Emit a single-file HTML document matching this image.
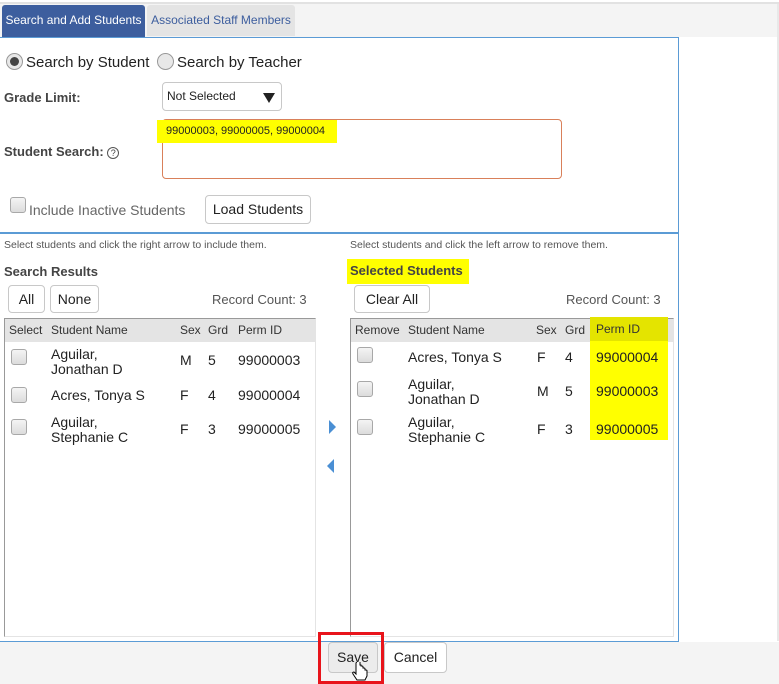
<!DOCTYPE html>
<html><head><meta charset="utf-8"><style>
*{box-sizing:border-box;margin:0;padding:0}
body{width:779px;height:684px;position:relative;background:#fff;font-family:"Liberation Sans",sans-serif;color:#222;overflow:hidden}
.a{position:absolute;white-space:nowrap}
.btn{position:absolute;border:1px solid #c8c8c8;border-radius:4px;background:#fff;font-size:14px;color:#222;text-align:center}
.cb{position:absolute;width:16px;height:16px;border:1px solid #a8a8a8;border-radius:3px;background:linear-gradient(#f4f4f4,#dcdcdc)}
.hdr{position:absolute;height:23px;background:#e4e4e4;font-size:12px;color:#333}
.t14{font-size:14px;color:#222;line-height:15px}
.s11{font-size:10.5px;color:#555}
</style></head><body>
<div class="a" style="left:0;top:2px;width:779px;height:2px;background:#e2e2e2"></div>
<div class="a" style="left:0;top:4px;width:779px;height:33px;background:#f4f4f4"></div>
<div class="a" style="left:777px;top:4px;width:2px;height:637px;background:#e8e8e8"></div>
<div class="a" style="left:2px;top:5px;width:143px;height:32px;background:#3d5e9e;border-radius:3px 3px 0 0;color:#fff;font-size:12px;line-height:31px;text-align:center">Search and Add Students</div>
<div class="a" style="left:147px;top:5px;width:148px;height:31px;background:#e4e4e4;border-radius:3px 3px 0 0;color:#3d5e9e;font-size:12px;line-height:31px;text-align:center">Associated Staff Members</div>
<div class="a" style="left:0;top:37px;width:679px;height:605px;border:1px solid #5b9bd5;border-left:none"></div>
<div class="a" style="left:0;top:232px;width:679px;height:2px;background:#5b9bd5"></div>
<div class="a" style="left:0;top:642px;width:779px;height:42px;background:#f4f4f4"></div>
<div class="a" style="left:6px;top:53px;width:17px;height:17px;border-radius:50%;border:1px solid #999;background:#e8e8e8"><div style="margin:3px;width:9px;height:9px;border-radius:50%;background:#444"></div></div>
<div class="a t14" style="left:26px;top:55px;font-size:15px">Search by Student</div>
<div class="a" style="left:157px;top:53px;width:17px;height:17px;border-radius:50%;border:1px solid #999;background:#e8e8e8"></div>
<div class="a t14" style="left:177px;top:55px;font-size:15px">Search by Teacher</div>
<div class="a" style="left:4px;top:90px;font-size:13px;font-weight:bold;color:#444">Grade Limit:</div>
<div class="a" style="left:162px;top:82px;width:120px;height:29px;border:1px solid #c8c8c8;border-radius:4px;font-size:12px;line-height:27px;padding-left:4px">Not Selected<span style="position:absolute;right:6px;top:10px;border-left:6px solid transparent;border-right:6px solid transparent;border-top:10px solid #222"></span></div>
<div class="a" style="left:4px;top:144px;font-size:13px;font-weight:bold;color:#444">Student Search: <span style="font-weight:normal;display:inline-block;width:12px;height:12px;border:1px solid #555;border-radius:50%;font-size:9px;line-height:10px;text-align:center">?</span></div>
<div class="a" style="left:162px;top:119px;width:400px;height:60px;border:1px solid #d9805a;border-radius:4px"></div>
<div class="a" style="left:157px;top:120px;width:180px;height:23px;background:#ffff00;font-size:11px;line-height:22px;padding-left:9px">99000003, 99000005, 99000004</div>
<div class="cb" style="left:10px;top:197px"></div>
<div class="a" style="left:29px;top:202px;font-size:14px;color:#666">Include Inactive Students</div>
<div class="btn" style="left:205px;top:195px;width:106px;height:29px;line-height:27px">Load Students</div>
<div class="a s11" style="left:4px;top:239px">Select students and click the right arrow to include them.</div>
<div class="a" style="left:4px;top:264px;font-size:13px;font-weight:bold;color:#444">Search Results</div>
<div class="btn" style="left:8px;top:285px;width:37px;height:28px;line-height:26px">All</div>
<div class="btn" style="left:50px;top:285px;width:49px;height:28px;line-height:26px">None</div>
<div class="a" style="left:212px;top:292px;font-size:13px;color:#555">Record Count: 3</div>
<div class="a" style="left:4px;top:318px;width:312px;height:319px;border-left:1px solid #999;border-top:1px solid #999;border-right:1px solid #e4e4e4;border-bottom:1px solid #e4e4e4"></div>
<div class="hdr" style="left:5px;top:319px;width:310px"><span class="a" style="left:4px;top:4px">Select</span><span class="a" style="left:46px;top:4px">Student Name</span><span class="a" style="left:175px;top:4px">Sex</span><span class="a" style="left:203px;top:4px">Grd</span><span class="a" style="left:233px;top:4px">Perm ID</span></div>
<div class="cb" style="left:11px;top:349px"></div><div class="a t14" style="left:51px;top:347px">Aguilar,<br>Jonathan D</div><div class="a t14" style="left:180px;top:353px">M</div><div class="a t14" style="left:208px;top:353px">5</div><div class="a t14" style="left:238px;top:353px">99000003</div>
<div class="cb" style="left:11px;top:387px"></div><div class="a t14" style="left:51px;top:388px">Acres, Tonya S</div><div class="a t14" style="left:180px;top:388px">F</div><div class="a t14" style="left:208px;top:388px">4</div><div class="a t14" style="left:238px;top:388px">99000004</div>
<div class="cb" style="left:11px;top:419px"></div><div class="a t14" style="left:51px;top:415px">Aguilar,<br>Stephanie C</div><div class="a t14" style="left:180px;top:422px">F</div><div class="a t14" style="left:208px;top:422px">3</div><div class="a t14" style="left:238px;top:422px">99000005</div>
<div class="a" style="left:329px;top:420px;border-top:7px solid transparent;border-bottom:7px solid transparent;border-left:7px solid #4a8fd4"></div>
<div class="a" style="left:327px;top:459px;border-top:7px solid transparent;border-bottom:7px solid transparent;border-right:7px solid #4a8fd4"></div>
<div class="a s11" style="left:350px;top:239px">Select students and click the left arrow to remove them.</div>
<div class="a" style="left:347px;top:259px;width:122px;height:25px;background:#ffff00;font-size:13px;font-weight:bold;color:#444;line-height:24px;padding-left:3px">Selected Students</div>
<div class="btn" style="left:354px;top:285px;width:76px;height:28px;line-height:26px">Clear All</div>
<div class="a" style="left:566px;top:292px;font-size:13px;color:#555">Record Count: 3</div>
<div class="a" style="left:350px;top:318px;width:324px;height:319px;border-left:1px solid #999;border-top:1px solid #999;border-right:1px solid #e4e4e4;border-bottom:1px solid #e4e4e4"></div>
<div class="hdr" style="left:351px;top:319px;width:322px"><span class="a" style="left:4px;top:4px">Remove</span><span class="a" style="left:57px;top:4px">Student Name</span><span class="a" style="left:185px;top:4px">Sex</span><span class="a" style="left:214px;top:4px">Grd</span></div>
<div class="a" style="left:590px;top:317px;width:78px;height:24px;background:#e4e400;font-size:12px;color:#333;padding:5px 0 0 6px">Perm ID</div>
<div class="a" style="left:590px;top:341px;width:78px;height:99px;background:#ffff00"></div>
<div class="cb" style="left:357px;top:347px"></div><div class="a t14" style="left:408px;top:350px">Acres, Tonya S</div><div class="a t14" style="left:537px;top:350px">F</div><div class="a t14" style="left:565px;top:350px">4</div><div class="a t14" style="left:596px;top:350px">99000004</div>
<div class="cb" style="left:357px;top:381px"></div><div class="a t14" style="left:408px;top:377px">Aguilar,<br>Jonathan D</div><div class="a t14" style="left:537px;top:384px">M</div><div class="a t14" style="left:565px;top:384px">5</div><div class="a t14" style="left:596px;top:384px">99000003</div>
<div class="cb" style="left:357px;top:419px"></div><div class="a t14" style="left:408px;top:415px">Aguilar,<br>Stephanie C</div><div class="a t14" style="left:537px;top:422px">F</div><div class="a t14" style="left:565px;top:422px">3</div><div class="a t14" style="left:596px;top:422px">99000005</div>
<div class="a" style="left:318px;top:632px;width:66px;height:52px;border:3px solid #e8141b"></div>
<div class="btn" style="left:328px;top:642px;width:50px;height:31px;line-height:29px;background:#ececec">Save</div>
<div class="btn" style="left:384px;top:642px;width:63px;height:31px;line-height:29px">Cancel</div>
<svg class="a" style="left:351px;top:662px" width="20" height="22" viewBox="0 0 20 22"><path d="M5 1 v11 l-2-2 q-2 0-1 2 l4 6 h8 l2-4 v-5 q0-1-1-1 h-1 v-1 q0-1-1-1 h-1 v-1 q0-1-1-1 h-1 v-1 h-1 v-5 q0-1-1-1 q-1 0-1 1z" fill="#fff" stroke="#000" stroke-width="1"/></svg>
</body></html>
